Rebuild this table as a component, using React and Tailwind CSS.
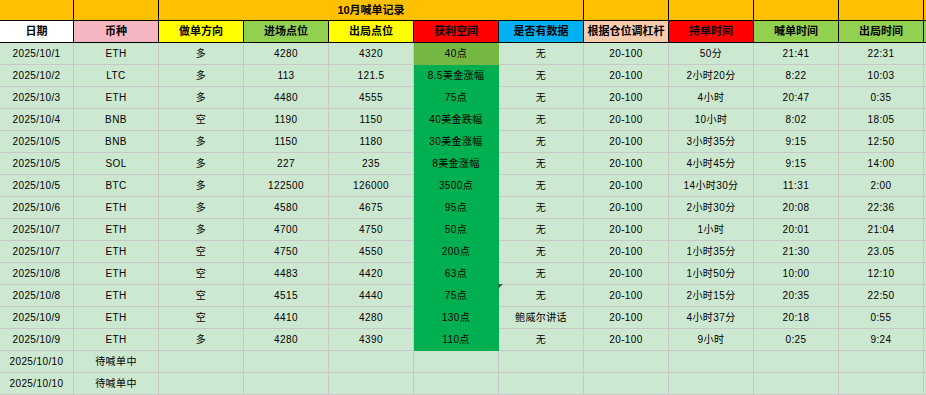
const font = { fontFamily: '"Liberation Sans", "Noto Sans CJK SC", sans-serif' }

const headers = [
  { label: '日期', bg: 'bg-white' },
  { label: '币种', bg: 'bg-[#f4b6c0]' },
  { label: '做单方向', bg: 'bg-[#ffff00]' },
  { label: '进场点位', bg: 'bg-[#92d050]' },
  { label: '出局点位', bg: 'bg-[#ffff00]' },
  { label: '获利空间', bg: 'bg-[#ff0000]' },
  { label: '是否有数据', bg: 'bg-[#00b0f0]' },
  { label: '根据仓位调杠杆', bg: 'bg-[#f8cbad]' },
  { label: '持单时间', bg: 'bg-[#ff0000]' },
  { label: '喊单时间', bg: 'bg-[#92d050]' },
  { label: '出局时间', bg: 'bg-[#92d050]' },
]

const rows = [
  ['2025/10/1', 'ETH', '多', '4280', '4320', '40点', '无', '20-100', '50分', '21:41', '22:31'],
  ['2025/10/2', 'LTC', '多', '113', '121.5', '8.5美金涨幅', '无', '20-100', '2小时20分', '8:22', '10:03'],
  ['2025/10/3', 'ETH', '多', '4480', '4555', '75点', '无', '20-100', '4小时', '20:47', '0:35'],
  ['2025/10/4', 'BNB', '空', '1190', '1150', '40美金跌幅', '无', '20-100', '10小时', '8:02', '18:05'],
  ['2025/10/5', 'BNB', '多', '1150', '1180', '30美金涨幅', '无', '20-100', '3小时35分', '9:15', '12:50'],
  ['2025/10/5', 'SOL', '多', '227', '235', '8美金涨幅', '无', '20-100', '4小时45分', '9:15', '14:00'],
  ['2025/10/5', 'BTC', '多', '122500', '126000', '3500点', '无', '20-100', '14小时30分', '11:31', '2:00'],
  ['2025/10/6', 'ETH', '多', '4580', '4675', '95点', '无', '20-100', '2小时30分', '20:08', '22:36'],
  ['2025/10/7', 'ETH', '多', '4700', '4750', '50点', '无', '20-100', '1小时', '20:01', '21:04'],
  ['2025/10/7', 'ETH', '空', '4750', '4550', '200点', '无', '20-100', '1小时35分', '21:30', '23.05'],
  ['2025/10/8', 'ETH', '空', '4483', '4420', '63点', '无', '20-100', '1小时50分', '10:00', '12:10'],
  ['2025/10/8', 'ETH', '空', '4515', '4440', '75点', '无', '20-100', '2小时15分', '20:35', '22:50'],
  ['2025/10/9', 'ETH', '空', '4410', '4280', '130点', '鲍威尔讲话', '20-100', '4小时37分', '20:18', '0:55'],
  ['2025/10/9', 'ETH', '多', '4280', '4390', '110点', '无', '20-100', '9小时', '0:25', '9:24'],
  ['2025/10/10', '待喊单中', '', '', '', '', '', '', '', '', ''],
  ['2025/10/10', '待喊单中', '', '', '', '', '', '', '', '', ''],
]

function widthOf(i) {
  return i === 0 ? 'w-[74px]' : 'w-[85px]'
}

function profitStyle(r) {
  if (r === 0) return 'bg-[#74b843] border-[#74b843]'
  if (r < 14) return 'bg-[#00b050] border-[#00b050]'
  return 'bg-[#cde8d0] border-[#c8c8c8]'
}

export default function App() {
  return (
    <div className="w-[926px] h-[395px] overflow-hidden bg-[#cde8d0] text-black" style={font}>
      {/* title row */}
      <div className="flex h-[21px] bg-[#ffc000] text-[11px] font-bold">
        <div className="w-[74px] shrink-0 border-r border-b border-black" />
        <div className="w-[85px] shrink-0 border-r border-b border-black" />
        <div className="w-[425px] shrink-0 border-r border-b border-black flex items-center justify-center">
          10月喊单记录
        </div>
        <div className="w-[85px] shrink-0 border-r border-b border-black" />
        <div className="w-[85px] shrink-0 border-r border-b border-black" />
        <div className="w-[85px] shrink-0 border-r border-b border-black" />
        <div className="w-[85px] shrink-0 border-r border-b border-black" />
        <div className="flex-1 border-b border-black" />
      </div>

      {/* column headers */}
      <div className="flex h-[22px] text-[11px] font-bold">
        {headers.map((h, i) => (
          <div
            key={i}
            className={`${widthOf(i)} ${h.bg} shrink-0 border-r border-b border-black flex items-center justify-center whitespace-nowrap`}
          >
            {h.label}
          </div>
        ))}
        <div className="flex-1 bg-[#92d050] border-b border-black" />
      </div>

      {/* data */}
      {rows.map((row, r) => (
        <div key={r} className="flex h-[22px] text-[10px] tracking-[0.4px]">
          {row.map((cell, c) => (
            <div
              key={c}
              className={`${widthOf(c)} ${c === 5 ? profitStyle(r) : 'border-[#c8c8c8]'} relative shrink-0 border-r border-b flex items-center justify-center whitespace-nowrap`}
            >
              {cell}
              {r === 11 && c === 6 && (
                <span className="absolute -left-px -top-px w-[5px] h-[5px] bg-[#217346] [clip-path:polygon(0_0,100%_0,0_100%)]" />
              )}
            </div>
          ))}
          <div className="flex-1 border-b border-[#c8c8c8]" />
        </div>
      ))}
    </div>
  )
}
